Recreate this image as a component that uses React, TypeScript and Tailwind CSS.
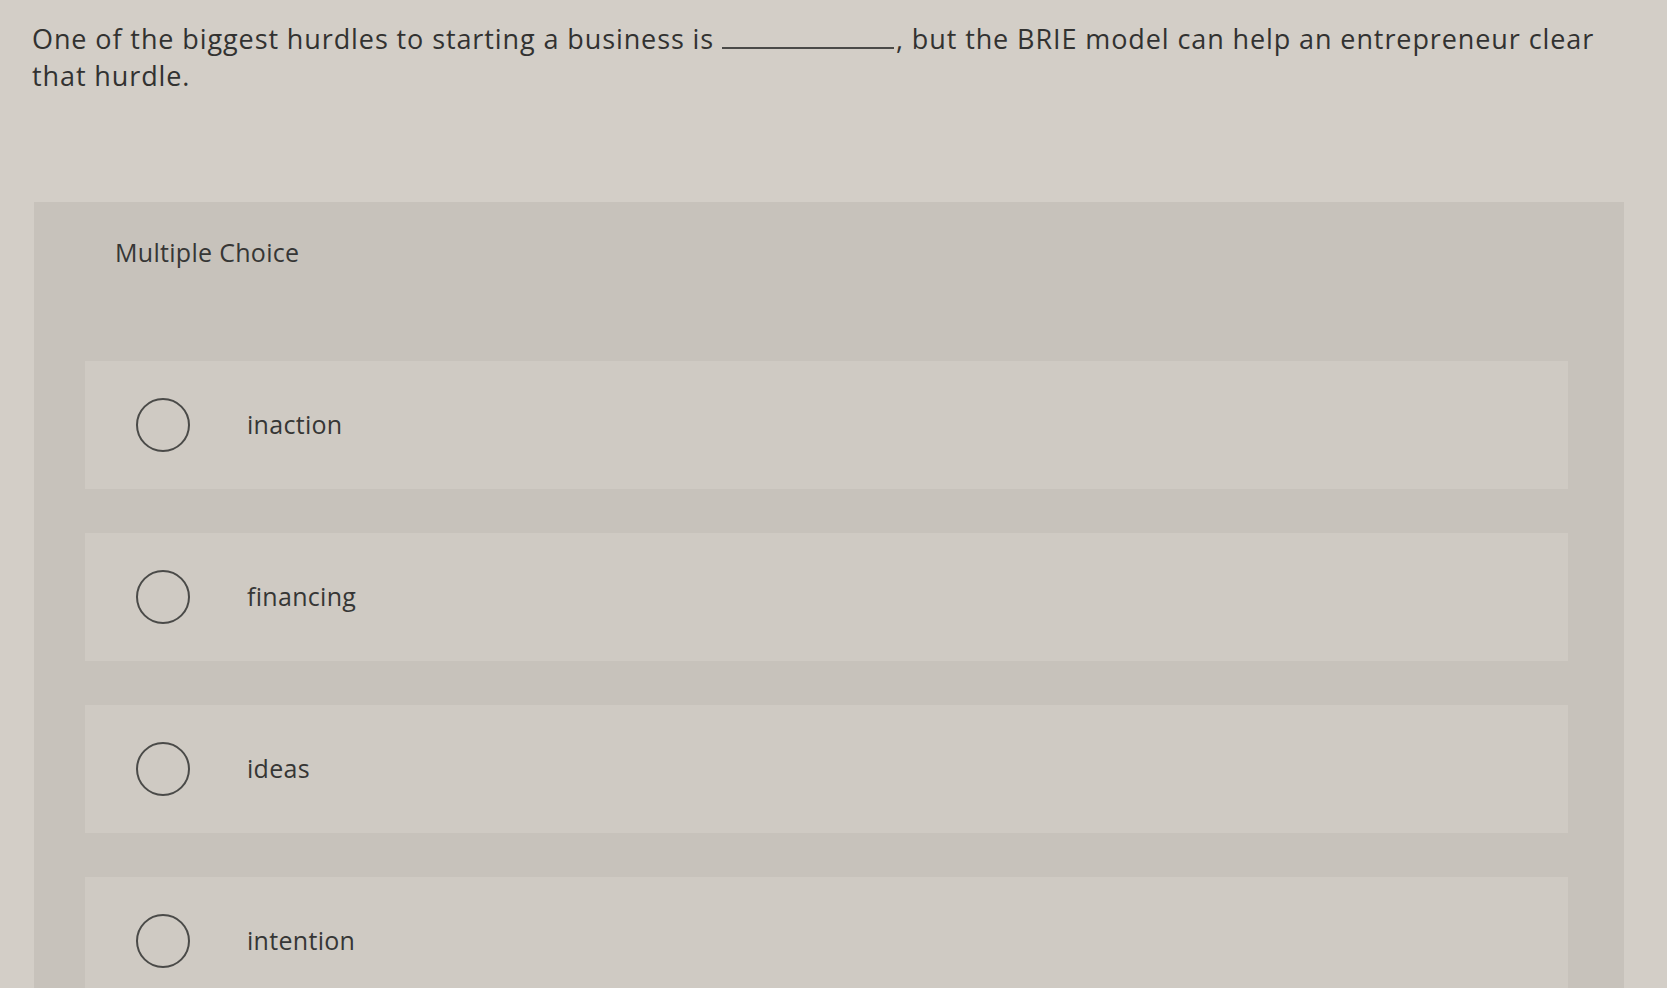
import React from 'react';

const OPTIONS = ['inaction', 'financing', 'ideas', 'intention'];

const RadioOption: React.FC<{ label: string }> = ({ label }) => (
  <div className="flex h-[128px] shrink-0 items-center bg-[#cfcac3] pl-[51px]">
    <span className="block h-[54px] w-[54px] shrink-0 rounded-full border-[2.5px] border-[#4a4a48]" />
    <span className="ml-[57px] text-[25px] tracking-[0.3px] text-[#363635]">{label}</span>
  </div>
);

export default function App() {
  return (
    <div className="h-screen overflow-hidden bg-[#d3cec7] font-['Open_Sans','Lato',sans-serif]">
      <p className="w-[1625px] pl-[32px] pt-[20px] text-[27px] leading-[37px] tracking-[0.9px] text-[#323231]">
        One of the biggest hurdles to starting a business is{' '}
        <span className="mr-[2px] inline-block w-[172px] border-b-2 border-[#4a4a48] align-baseline" />
        , but the BRIE model can help an entrepreneur clear that hurdle.
      </p>

      <div className="ml-[34px] mr-[43px] mt-[108px] bg-[#c7c2bb] pb-[40px]">
        <div className="h-[159px] pl-[81px] pt-[32px] text-[25px] tracking-[0.3px] text-[#363635]">Multiple Choice</div>
        <div className="ml-[51px] mr-[56px] flex flex-col gap-[44px]">
          {OPTIONS.map(opt => (
            <RadioOption key={opt} label={opt} />
          ))}
        </div>
      </div>
    </div>
  );
}
